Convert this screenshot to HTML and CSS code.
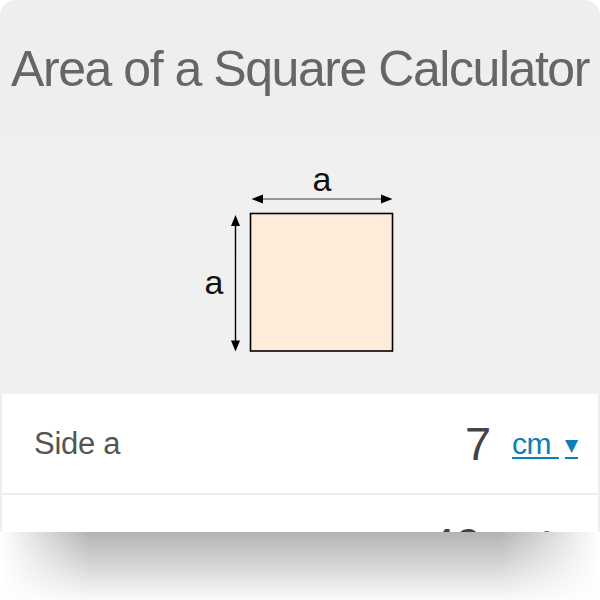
FILE: index.html
```html
<!DOCTYPE html>
<html lang="en">
<head>
    <meta charset="UTF-8">
    <meta name="viewport" content="width=device-width, initial-scale=1.0">
    <title>Area of a Square Calculator</title>
    <link rel="stylesheet" href="styles.css">
</head>
<body>

<div class="calc">
    <header class="calc-title">
        <h1>Area of a Square Calculator</h1>
    </header>

    <div class="figure">
        <svg class="figure-svg" viewBox="2 135 596 259" width="596" height="259">
            <rect x="250.5" y="213.5" width="142" height="137.5" fill="#feebd9" stroke="#000" stroke-width="1.6"/>
            <!-- top dimension -->
            <line x1="258" y1="199" x2="386" y2="199" stroke="#777" stroke-width="1.4"/>
            <polygon points="251.5,199 263,194.5 263,203.5" fill="#000"/>
            <polygon points="392.5,199 381,194.5 381,203.5" fill="#000"/>
            <text x="322" y="191" class="dim">a</text>
            <!-- left dimension -->
            <line x1="235.5" y1="222" x2="235.5" y2="345" stroke="#000" stroke-width="1.4"/>
            <polygon points="235.5,215 231,226 240,226" fill="#000"/>
            <polygon points="235.5,351.5 231,340.5 240,340.5" fill="#000"/>
            <text x="214" y="294" class="dim">a</text>
        </svg>
    </div>

    <div class="rows">
        <div class="row">
            <span class="label">Side a</span>
            <span class="value">7</span>
            <a class="unit" href="#">cm <span class="caret">&#9660;</span></a>
        </div>
        <div class="row">
            <span class="label">Area</span>
            <span class="value">49</span>
            <a class="unit" href="#">cm<sup>2</sup> <span class="caret">&#9660;</span></a>
        </div>
    </div>
</div>
<div class="shade"></div>

</body>
</html>
```

FILE: styles.css
```css
body { margin: 0; padding: 0; background: #fff; font-family: "Liberation Sans", Arial, sans-serif; }
.calc { width: 600px; height: 532px; box-sizing: border-box; border: 2px solid #eee; border-bottom: 0; border-radius: 16px 16px 0 0; background: #eee; overflow: hidden; }
.calc-title { height: 133px; box-sizing: border-box; padding-top: 42px; text-align: center; }
.calc-title h1 { margin: 0; font-size: 50px; line-height: 50px; font-weight: normal; letter-spacing: -1.45px; color: #666; }
.figure { height: 259px; background: #f0f0f0; }
.figure-svg { display: block; }
.dim { font-family: "Liberation Sans", Arial, sans-serif; font-size: 34px; text-anchor: middle; fill: #111; }
.rows { display: flex; flex-direction: column; gap: 2px; }
.row { height: 99px; flex: none; display: flex; align-items: center; padding: 0 20px 0 32px; background: #fff; }
.label { flex: 1; font-size: 31px; color: #555; letter-spacing: -0.3px; }
.value { font-size: 47px; color: #444; margin-right: 21px; }
.unit { font-size: 30px; color: #0b7db8; text-decoration: underline; text-decoration-thickness: 2px; text-underline-offset: 3px; white-space: nowrap; letter-spacing: -0.5px; }
.unit sup { font-size: 18px; }
.caret { font-family: "DejaVu Sans", sans-serif; font-size: 17px; vertical-align: 3px; padding-left: 6px; letter-spacing: 0; }
.shade { width: 600px; height: 68px; background: linear-gradient(to bottom, #b3b3b3, #fafafa); -webkit-mask-image: linear-gradient(to right, transparent, #000 90px, #000 500px, transparent 600px); mask-image: linear-gradient(to right, transparent, #000 90px, #000 500px, transparent 600px); }
```
